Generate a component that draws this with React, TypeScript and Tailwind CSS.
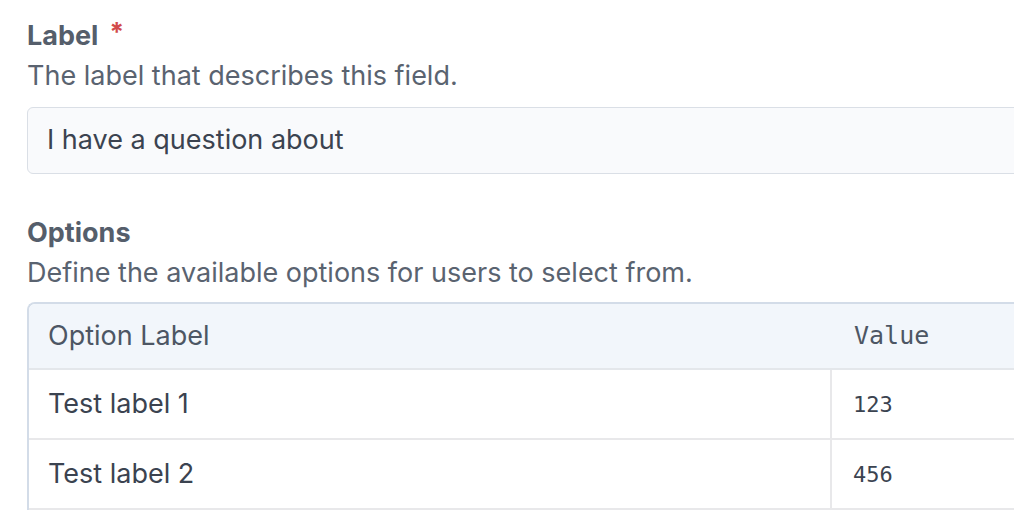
import React from "react";

const rows = [
  { label: "Test label 1", value: "123" },
  { label: "Test label 2", value: "456" },
];

export default function App() {
  return (
    <div className="h-[512px] w-[1014px] overflow-hidden bg-white font-['Inter',sans-serif]">
      <div className="w-[1120px] pl-[27px] pt-[16px]">
        {/* Label field */}
        <div className="flex h-[40px] items-center text-[27px] font-bold leading-[40px] text-[#555e6b]">
          Label
          <span className="relative -top-[4px] ml-[11px] text-[26px] leading-none text-[#d24b4b]">*</span>
        </div>
        <p className="text-[27px] leading-[40px] text-[#5a6370]">
          The label that describes this field.
        </p>
        <div className="mt-[11px] flex h-[67px] items-center rounded-[6px] border border-[#dadfe6] bg-[#f9fafc] px-[19px] text-[27px] text-[#3b4350]">
          I have a question about
        </div>

        {/* Options field */}
        <div className="mt-[39px] text-[27px] font-bold leading-[40px] text-[#555e6b]">
          Options
        </div>
        <p className="text-[27px] leading-[40px] text-[#5a6370]">
          Define the available options for users to select from.
        </p>
        <div className="mt-[9px] overflow-hidden rounded-t-[8px] border-l-2 border-t-2 border-[#d3dce8]">
          <div className="flex h-[66px] items-center border-b-2 border-[#e4e7eb] bg-[#f2f6fb] text-[#4d5664]">
            <div className="w-[803px] pl-[19px] text-[27px]">Option Label</div>
            <div className="pl-[22px] font-['DejaVu_Sans_Mono',monospace] text-[25px]">Value</div>
          </div>
          {rows.map((r) => (
            <div key={r.value} className="flex h-[70px] border-b-2 border-[#e8e8ea] text-[#3b4350]">
              <div className="flex w-[803px] items-center border-r-2 border-[#e8e8ea] pl-[19px] text-[27px]">
                {r.label}
              </div>
              <div className="flex items-center pl-[21px] font-['DejaVu_Sans_Mono',monospace] text-[22px]">
                {r.value}
              </div>
            </div>
          ))}
        </div>
      </div>
    </div>
  );
}
